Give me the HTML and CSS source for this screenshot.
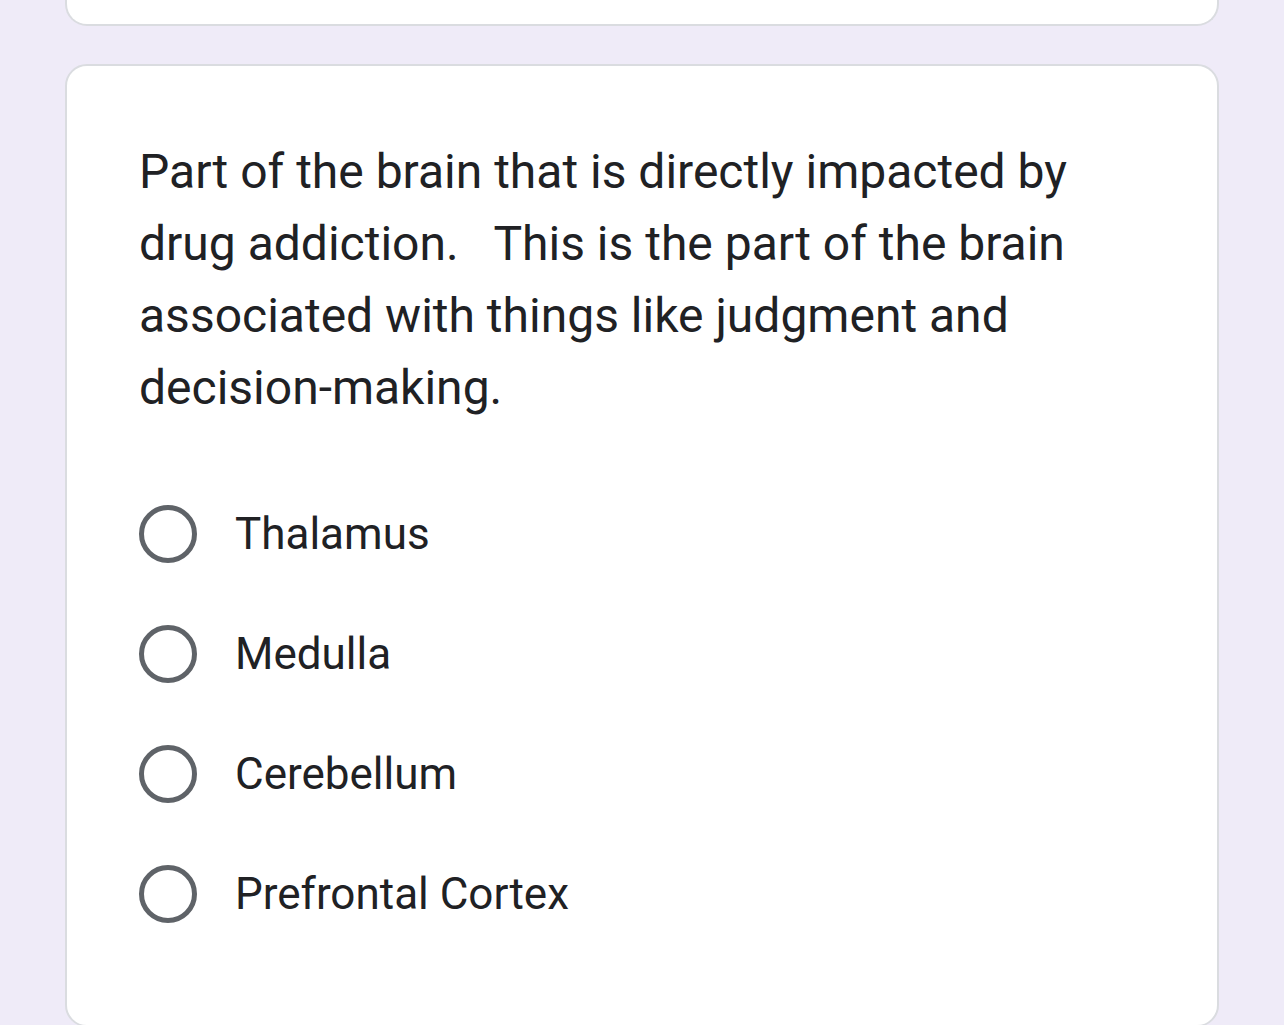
FILE: index.html
```html
<!DOCTYPE html>
<html lang="en">
<head>
<meta charset="utf-8">
<title>Quiz</title>
<link rel="stylesheet" href="styles.css">
</head>
<body>
<div class="page">
  <div class="card card-prev"></div>
  <div class="card question">
    <div class="title">Part of the brain that is directly impacted by drug addiction.&nbsp;&nbsp; This is the part of the brain associated with things like judgment and decision-making.</div>
    <div class="options">
      <label class="option"><span class="radio"></span><span class="label">Thalamus</span></label>
      <label class="option"><span class="radio"></span><span class="label">Medulla</span></label>
      <label class="option"><span class="radio"></span><span class="label">Cerebellum</span></label>
      <label class="option"><span class="radio"></span><span class="label">Prefrontal Cortex</span></label>
    </div>
  </div>
</div>
</body>
</html>
```
FILE: styles.css
```css
html, body {
  margin: 0;
  padding: 0;
  background: #efebf8;
  font-family: Roboto, "Liberation Sans", sans-serif;
  color: #202124;
}
.page {
  display: flex;
  flex-direction: column;
  gap: 38px;
  padding: 0 65px;
}
.card {
  background: #fff;
  border: 2px solid #dadce0;
  border-radius: 22px;
}
.card-prev {
  height: 24px;
  border-top: none;
  border-radius: 0 0 22px 22px;
}
.question {
  padding: 70px 72px 102px 72px;
}
.title {
  font-size: 48px;
  line-height: 72px;
  max-width: 960px;
}
.options {
  display: flex;
  flex-direction: column;
  gap: 62px;
  margin-top: 81px;
}
.option {
  display: flex;
  align-items: center;
  gap: 38px;
  height: 58px;
}
.radio {
  width: 48px;
  height: 48px;
  border: 5px solid #5f6368;
  border-radius: 50%;
  flex: none;
}
.label {
  font-size: 44px;
  line-height: 58px;
}
```
